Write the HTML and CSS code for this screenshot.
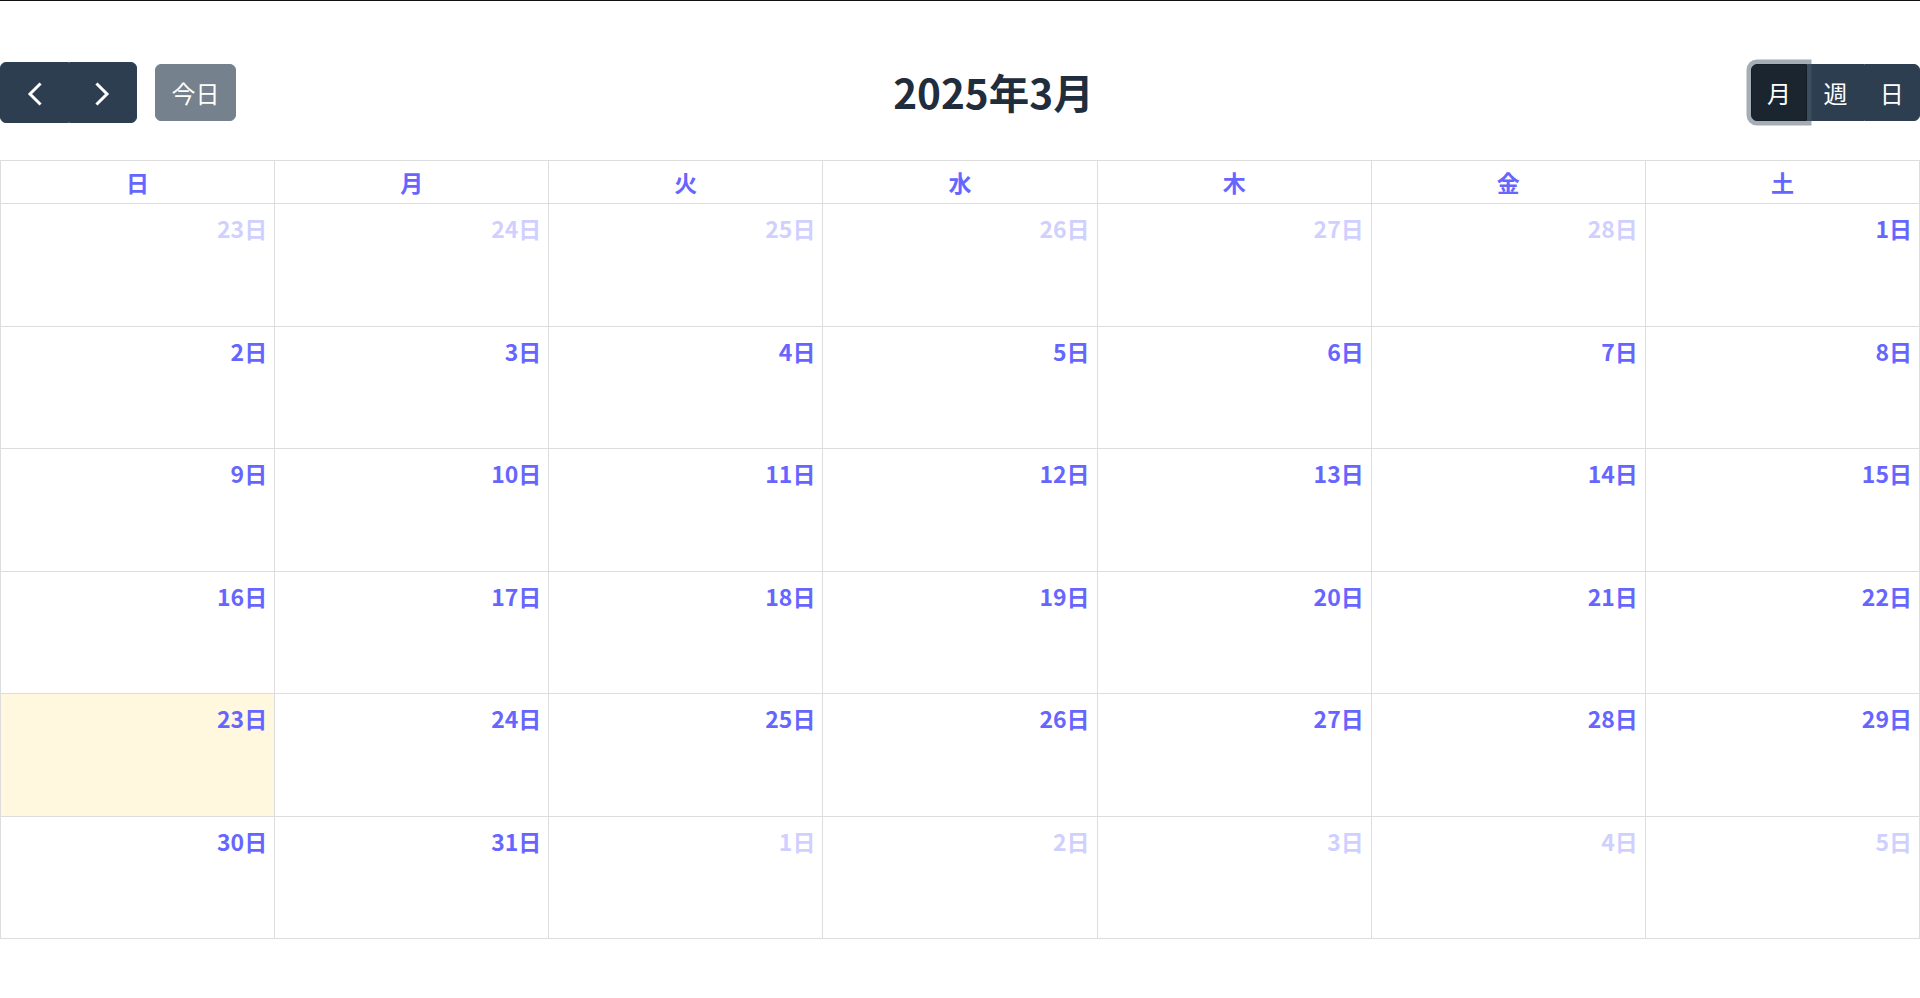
FILE: index.html
```html
<!DOCTYPE html>
<html lang="ja">
<head>
<meta charset="utf-8">
<title>カレンダー</title>
<link rel="stylesheet" href="styles.css">
</head>
<body>
<div class="cal">
  <div class="toolbar">
    <div class="chunk">
      <div class="btn-group">
        <button class="btn btn-nav" type="button" aria-label="前">
          <svg class="icon" viewBox="0 0 36 36" width="36" height="36"><polyline points="23.5,9.5 14,19 23.5,28.5" fill="none" stroke="#fff" stroke-width="3" stroke-linecap="square"/></svg>
        </button>
        <button class="btn btn-nav" type="button" aria-label="次">
          <svg class="icon" viewBox="0 0 36 36" width="36" height="36"><polyline points="12.5,9.5 22,19 12.5,28.5" fill="none" stroke="#fff" stroke-width="3" stroke-linecap="square"/></svg>
        </button>
      </div>
      <button class="btn btn-today" type="button" disabled>今日</button>
    </div>
    <h2 class="title">2025年3月</h2>
    <div class="chunk">
      <div class="btn-group">
        <button class="btn btn-view active" type="button">月</button>
        <button class="btn btn-view" type="button">週</button>
        <button class="btn btn-view" type="button">日</button>
      </div>
    </div>
  </div>

  <div class="grid">
    <div class="head">日</div><div class="head">月</div><div class="head">火</div><div class="head">水</div><div class="head">木</div><div class="head">金</div><div class="head">土</div>

    <div class="day other"><span class="num">23日</span></div>
    <div class="day other"><span class="num">24日</span></div>
    <div class="day other"><span class="num">25日</span></div>
    <div class="day other"><span class="num">26日</span></div>
    <div class="day other"><span class="num">27日</span></div>
    <div class="day other"><span class="num">28日</span></div>
    <div class="day"><span class="num">1日</span></div>

    <div class="day"><span class="num">2日</span></div>
    <div class="day"><span class="num">3日</span></div>
    <div class="day"><span class="num">4日</span></div>
    <div class="day"><span class="num">5日</span></div>
    <div class="day"><span class="num">6日</span></div>
    <div class="day"><span class="num">7日</span></div>
    <div class="day"><span class="num">8日</span></div>

    <div class="day"><span class="num">9日</span></div>
    <div class="day"><span class="num">10日</span></div>
    <div class="day"><span class="num">11日</span></div>
    <div class="day"><span class="num">12日</span></div>
    <div class="day"><span class="num">13日</span></div>
    <div class="day"><span class="num">14日</span></div>
    <div class="day"><span class="num">15日</span></div>

    <div class="day"><span class="num">16日</span></div>
    <div class="day"><span class="num">17日</span></div>
    <div class="day"><span class="num">18日</span></div>
    <div class="day"><span class="num">19日</span></div>
    <div class="day"><span class="num">20日</span></div>
    <div class="day"><span class="num">21日</span></div>
    <div class="day"><span class="num">22日</span></div>

    <div class="day today"><span class="num">23日</span></div>
    <div class="day"><span class="num">24日</span></div>
    <div class="day"><span class="num">25日</span></div>
    <div class="day"><span class="num">26日</span></div>
    <div class="day"><span class="num">27日</span></div>
    <div class="day"><span class="num">28日</span></div>
    <div class="day"><span class="num">29日</span></div>

    <div class="day"><span class="num">30日</span></div>
    <div class="day"><span class="num">31日</span></div>
    <div class="day other"><span class="num">1日</span></div>
    <div class="day other"><span class="num">2日</span></div>
    <div class="day other"><span class="num">3日</span></div>
    <div class="day other"><span class="num">4日</span></div>
    <div class="day other"><span class="num">5日</span></div>
  </div>
</div>
</body>
</html>
```

FILE: styles.css
```css
html, body {
  margin: 0;
  padding: 0;
  background: #fff;
}

body {
  border-top: 1px solid #111;
  font-family: "Noto Sans CJK JP", "Noto Sans", sans-serif;
  font-size: 24px;
  line-height: 1.5;
}

.cal {
  padding-top: 61px;
}

.toolbar {
  display: flex;
  justify-content: space-between;
  align-items: center;
  height: 61px;
  margin-bottom: 37px;
}

.chunk {
  display: flex;
  align-items: center;
}

.btn-group {
  display: flex;
  position: relative;
}

.btn {
  font-family: inherit;
  font-size: 24px;
  line-height: 36px;
  font-weight: 400;
  color: #fff;
  background: #2c3e50;
  border: 1px solid #2c3e50;
  border-radius: 6px;
  padding: 9.6px 15.6px;
  margin: 0;
  box-sizing: border-box;
  cursor: pointer;
}

.btn-group .btn {
  border-radius: 0;
}

.btn-group .btn:first-child {
  border-top-left-radius: 6px;
  border-bottom-left-radius: 6px;
}

.btn-group .btn:last-child {
  border-top-right-radius: 6px;
  border-bottom-right-radius: 6px;
}

.btn-nav {
  height: 61px;
  width: 68.5px;
  padding: 0;
  display: flex;
  align-items: center;
  justify-content: center;
}

.icon {
  display: block;
}

.btn-today {
  margin-left: 18px;
  height: 57px;
  width: 81px;
  padding: 0;
  opacity: 0.65;
  cursor: default;
}

.btn-view {
  height: 57px;
  width: 56.4px;
  padding: 0;
}

.btn-view.active {
  background: #1a252f;
  border-color: #151e27;
  box-shadow: 0 0 0 4.5px rgba(76, 91, 106, 0.5);
  position: relative;
  z-index: 1;
}

.title {
  margin: 0;
  font-size: 40.5px;
  font-weight: 700;
  line-height: 50px;
  color: #1f2d3d;
  position: relative;
  top: -1px;
}

.grid {
  display: grid;
  grid-template-columns: repeat(7, 1fr);
  grid-template-rows: 43px repeat(6, 122.5px);
  border-top: 1px solid #ddd;
  border-left: 1px solid #ddd;
  width: 1920px;
  box-sizing: border-box;
}

.head,
.day {
  border-right: 1px solid #ddd;
  border-bottom: 1px solid #ddd;
  box-sizing: border-box;
}

.head {
  text-align: center;
  font-size: 23px;
  font-weight: 700;
  color: #6666ff;
  line-height: 42px;
}

.day {
  display: flex;
  justify-content: flex-end;
  align-items: flex-start;
  padding: 6px 7px 0 0;
}

.num {
  font-size: 23px;
  font-weight: 700;
  color: #6666ff;
  line-height: 36px;
}

.other .num {
  opacity: 0.3;
}

.today {
  background: #fff8de;
}
```
